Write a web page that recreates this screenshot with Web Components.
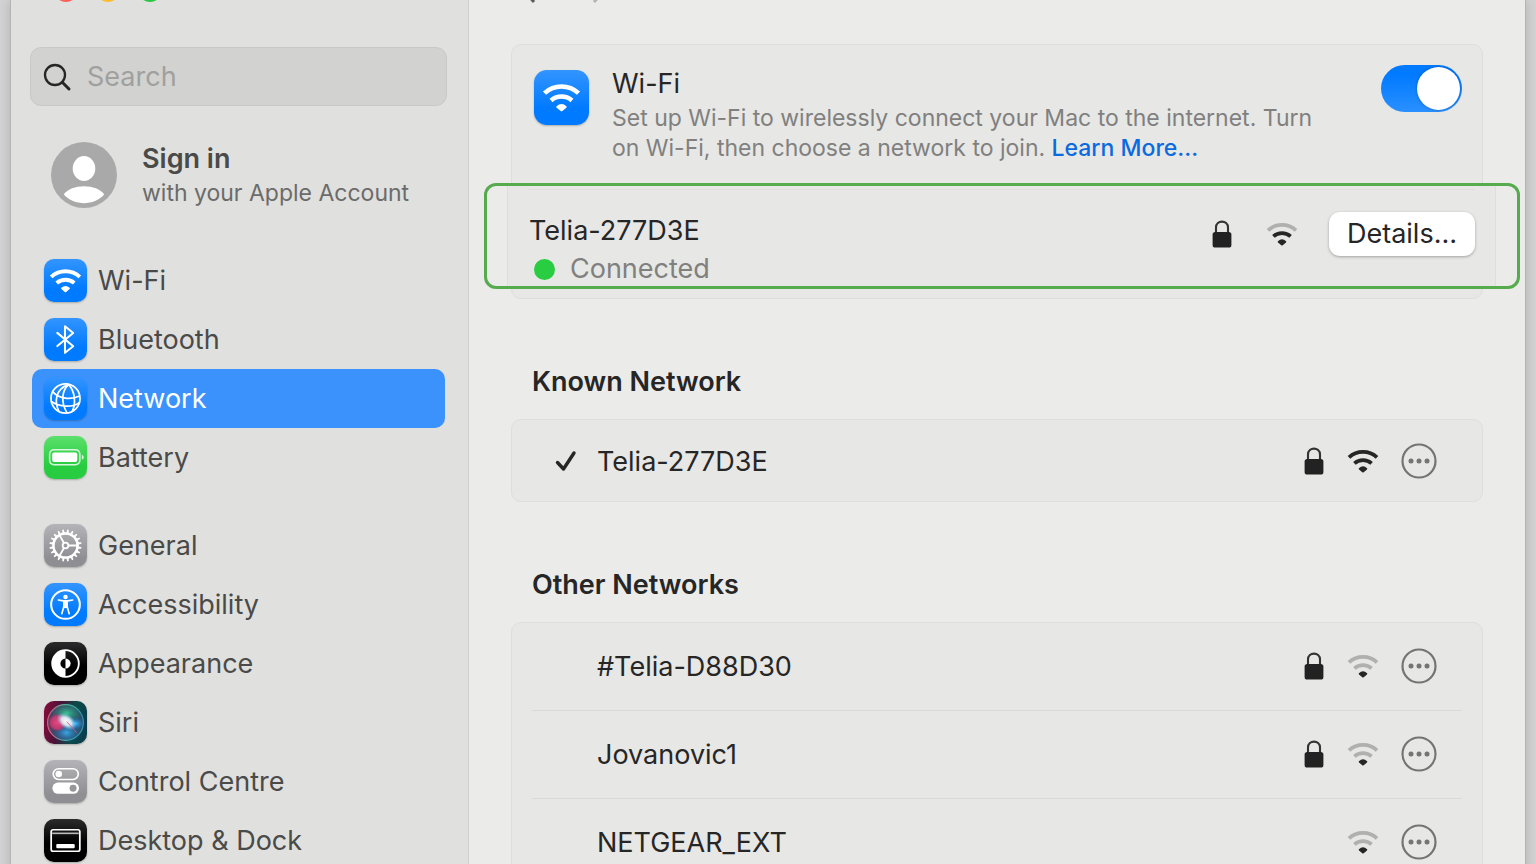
<!DOCTYPE html>
<html lang="en">
<head>
<meta charset="utf-8">
<title>Network</title>
<style>
  body {
    margin: 0;
    height: 100vh;
    overflow: hidden;
    background: #d3d3d3;
    color: #262626;
    font-family: Inter, "Liberation Sans", sans-serif;
    font-size: 27px;
    line-height: 34px;
  }
</style>
</head>
<body>
<settings-window>
  <settings-sidebar slot="sidebar">
    <search-field></search-field>
    <account-link name="Sign in" detail="with your Apple Account"></account-link>
    <nav-group label="Connectivity">
      <nav-item icon="wifi">Wi-Fi</nav-item>
      <nav-item icon="bluetooth">Bluetooth</nav-item>
      <nav-item icon="network" selected>Network</nav-item>
      <nav-item icon="battery">Battery</nav-item>
    </nav-group>
    <nav-group label="System">
      <nav-item icon="general">General</nav-item>
      <nav-item icon="accessibility">Accessibility</nav-item>
      <nav-item icon="appearance">Appearance</nav-item>
      <nav-item icon="siri">Siri</nav-item>
      <nav-item icon="control">Control Centre</nav-item>
      <nav-item icon="dock">Desktop &amp; Dock</nav-item>
    </nav-group>
  </settings-sidebar>

  <pane-toolbar></pane-toolbar>
  <settings-card>
    <wifi-header></wifi-header>
    <current-network name="Telia-277D3E" status="Connected" signal="2"></current-network>
  </settings-card>
  <section-title>Known Network</section-title>
  <settings-card>
    <network-row signal="3" locked known>Telia-277D3E</network-row>
  </settings-card>
  <section-title>Other Networks</section-title>
  <settings-card>
    <network-row signal="1" locked>#Telia-D88D30</network-row>
    <network-row signal="1" locked>Jovanovic1</network-row>
    <network-row signal="1">NETGEAR_EXT</network-row>
  </settings-card>
</settings-window>

<script>
// the three parts of the wifi symbol, weakest first
const wifiParts = [
  '<path d="M16.9 28.2Q21 24.4 25.1 28.2Q25.6 28.8 25 29.4L21.7 32.2Q21 32.8 20.3 32.2L17 29.4Q16.4 28.8 16.9 28.2Z" fill="currentColor" class="p1"/>',
  '<path d="M12.4 23.4A13.2 13.2 0 0 1 29.6 23.4" fill="none" stroke="currentColor" stroke-width="3.8" class="p2"/>',
  '<path d="M7 17.4A20.6 20.6 0 0 1 35 17.4" fill="none" stroke="currentColor" stroke-width="3.8" class="p3"/>'
];

const gearTeeth = Array.from({ length: 20 }, (_, i) =>
  `<path d="M19.8 9l.5-3.7h1.4l.5 3.7z" transform="rotate(${i * 18 + 9} 21 21)"/>`).join('');

const icons = {
  wifi: wifiParts.join(''),
  bluetooth: '<path d="M13 14.5L28.5 27.6L20.5 34V8L28.5 14.6L13 27.4" fill="none" stroke="#fff" stroke-width="2" stroke-linejoin="round" stroke-linecap="round"/>',
  network: `<g fill="none" stroke="#fff" stroke-width="1.7">
      <circle cx="21" cy="21" r="14.2"/>
      <path d="M24 7.2C17 14 16.5 25 22.5 35M24 7.2C11 12 10 24 14.5 33.5M24 7.2C31 15 31 27 27.5 33.5M8.6 14.5C15 21.5 26 22.5 35 18.5M7.2 24C15 29.5 28 30 34.5 25"/>
    </g>`,
  battery: `<rect x="5.5" y="13.5" width="29.5" height="14.5" rx="4.2" fill="none" stroke="#d8f7dc" stroke-width="1.5"/>
    <rect x="8" y="16" width="24.5" height="9.5" rx="2" fill="#fff"/>
    <path d="M37 18.4Q38.8 19.2 38.8 20.8T37 23.2Z" fill="#d8f7dc"/>`,
  general: `<g fill="#fff">${gearTeeth}</g>
    <g fill="none" stroke="#fff">
      <circle cx="21" cy="21" r="11.8" stroke-width="2.5"/>
      <circle cx="21" cy="21" r="2.8" stroke-width="1.8"/>
      <path d="M24 21H33M19.5 18.5L15 10.6M19.5 23.5L15 31.4" stroke-width="1.8"/>
    </g>`,
  accessibility: `<circle cx="21" cy="21" r="14" fill="none" stroke="#fff" stroke-width="2"/>
    <circle cx="21" cy="13.6" r="2.2" fill="#fff"/>
    <path d="M14 16.6L19 17.5H23L28 16.6M19.5 18H22.5L22.6 23L24.6 30M19.5 18L19.4 23L17.4 30" fill="none" stroke="#fff" stroke-width="1.6" stroke-linecap="round" stroke-linejoin="round"/>
    <path d="M19 17H23V24.5H19Z" fill="#fff"/>`,
  appearance: `<circle cx="21" cy="21" r="13" fill="none" stroke="#fff" stroke-width="1.8"/>
    <path d="M21 8A13 13 0 0 0 21 34V26A5 5 0 0 1 21 16Z" fill="#fff"/>
    <path d="M21 16A5 5 0 0 1 21 26Z" fill="#fff"/>`,
  siri: `<defs>
      <radialGradient id="glow"><stop offset="0" stop-color="#fff"/><stop offset=".5" stop-color="#eaf8ff" stop-opacity=".85"/><stop offset="1" stop-color="#8cf" stop-opacity="0"/></radialGradient>
      <radialGradient id="pink"><stop offset="0" stop-color="#e8487f"/><stop offset=".7" stop-color="#cf3870" stop-opacity=".85"/><stop offset="1" stop-color="#c0205a" stop-opacity="0"/></radialGradient>
      <radialGradient id="blue"><stop offset="0" stop-color="#3fbcff"/><stop offset="1" stop-color="#1270d0" stop-opacity="0"/></radialGradient>
      <radialGradient id="green"><stop offset="0" stop-color="#3ccf9a" stop-opacity=".9"/><stop offset="1" stop-color="#1b9c7a" stop-opacity="0"/></radialGradient>
      <linearGradient id="ring" x2="1"><stop offset="0" stop-color="#e0557e"/><stop offset=".5" stop-color="#54b89c"/><stop offset="1" stop-color="#2c91b8"/></linearGradient>
    </defs>
    <circle cx="21" cy="21" r="17.5" fill="#3a5670" fill-opacity=".75" stroke="url(#ring)" stroke-width="1.2"/>
    <ellipse cx="22" cy="12" rx="15" ry="10" fill="url(#green)"/>
    <ellipse cx="22" cy="31" rx="14" ry="10" fill="url(#blue)" opacity=".8"/>
    <circle cx="13" cy="21" r="9" fill="url(#pink)"/>
    <ellipse cx="31" cy="22" rx="9" ry="6.5" fill="url(#blue)"/>
    <ellipse cx="22" cy="20" rx="11" ry="7" fill="url(#glow)" transform="rotate(35 22 20)"/>
    <path d="M22 20L32 31" stroke="#d0567f" stroke-width=".8"/>`,
  control: `<rect x="9" y="8.5" width="24.5" height="10.5" rx="5.25" fill="none" stroke="#fff" stroke-width="1.6"/>
    <circle cx="14.4" cy="13.75" r="3.2" fill="#fff"/>
    <rect x="8.2" y="22" width="26" height="11" rx="5.5" fill="#fff"/>
    <circle cx="28.4" cy="27.5" r="3.4" fill="#97979b"/>`,
  dock: `<rect x="7" y="10.5" width="28" height="21" rx="2" fill="none" stroke="#fff" stroke-width="1.7"/>
    <path d="M8 14H34" stroke="#bbb" stroke-width="1.6"/>
    <rect x="12" y="24.5" width="18" height="4" rx="1" fill="#fff"/>`
};

const tiles = {
  wifi: '#3395ff, #007aff 70%',
  bluetooth: '#3395ff, #007aff 70%',
  network: '#3395ff, #007aff 70%',
  accessibility: '#3395ff, #007aff 70%',
  battery: '#5be06c, #28cc40 70%',
  general: '#b3b3b8, #8e8e93 80%',
  control: '#b3b3b8, #8e8e93 80%',
  appearance: '#2c2c2c, #000 55%',
  dock: '#2c2c2c, #000 55%',
  siri: '100deg, #8c0c3c, #4a1238 35%, #0b4a48 65%, #0a3a50'
};

class SettingsWindow extends HTMLElement {
  constructor() {
    super();
    this.attachShadow({ mode: 'open' });
    this.shadowRoot.innerHTML = `
    <style>
      :host {
        display: grid;
        grid-template-columns: 457px minmax(0, 1fr);
        min-height: 100vh;
        margin: 0 10px;
        background: #ebebe9;
        border: solid #b4b4b4;
        border-width: 0 1px;
        box-shadow: 0 0 12px rgba(0,0,0,0.16);
        box-sizing: border-box;
      }
      main {
        padding: 0 42px;
        border-left: 1px solid #d0d0ce;
      }
    </style>
    <slot name="sidebar"></slot>
    <main><slot></slot></main>
    `;
  }
}

class SettingsSidebar extends HTMLElement {
  constructor() {
    super();
    this.attachShadow({ mode: 'open' });
    this.shadowRoot.innerHTML = `
    <style>
      :host {
        display: block;
        padding: 0 21px 0 19px;
        background: #e0e0de;
        color: #4a4a49;
      }
      .lights {
        display: flex;
        gap: 18px;
        padding-left: 24px;
        margin: -22px 0 45px;
      }
      .lights button {
        width: 24px;
        height: 24px;
        padding: 0;
        border: 0;
        border-radius: 50%;
      }
      .close { background: #ff5f57; }
      .minimise { background: #febc2e; }
      .zoom { background: #28c840; }
    </style>
    <div class="lights">
      <button class="close" aria-label="Close"></button>
      <button class="minimise" aria-label="Minimise"></button>
      <button class="zoom" aria-label="Zoom"></button>
    </div>
    <slot></slot>
    `;
  }
}

class SearchField extends HTMLElement {
  constructor() {
    super();
    this.attachShadow({ mode: 'open' });
    this.shadowRoot.innerHTML = `
    <style>
      label {
        display: flex;
        align-items: center;
        gap: 15px;
        height: 59px;
        padding: 0 12px;
        box-sizing: border-box;
        background: #d2d2d0;
        border: 1px solid #c9c9c7;
        border-radius: 11px;
      }
      svg { flex: none; }
      input {
        flex: 1;
        min-width: 0;
        padding: 0;
        border: 0;
        outline: 0;
        background: none;
        font: inherit;
        color: inherit;
      }
      input::placeholder { color: #a0a09f; }
    </style>
    <label>
      <svg width="29" height="30" viewBox="0 0 29 30" fill="none" stroke="#262626" stroke-linecap="round" aria-hidden="true">
        <circle cx="12" cy="13" r="10" stroke-width="2.3"/>
        <path d="M19.5 20.5L26 27" stroke-width="3"/>
      </svg>
      <input type="text" placeholder="Search" aria-label="Search">
    </label>
    `;
  }
}

class AccountLink extends HTMLElement {
  constructor() {
    super();
    this.attachShadow({ mode: 'open' });
    this.shadowRoot.innerHTML = `
    <style>
      a {
        display: flex;
        align-items: center;
        gap: 25px;
        margin: 34px 0 41px 21px;
        color: inherit;
        text-decoration: none;
      }
      svg { flex: none; }
      span { display: block; }
      .text { padding-top: 2px; }
      .name { font-weight: 600; }
      .detail { color: #6b6b6a; font-size: 23px; }
    </style>
    <a href="#account">
      <svg width="66" height="66" viewBox="0 0 66 66" aria-hidden="true">
        <circle cx="33" cy="33" r="33" fill="#a9a9a9"/>
        <ellipse cx="33" cy="26.5" rx="11.3" ry="12.5" fill="#fff"/>
        <path d="M12.8 52.5C20 41.5 46 41.5 53.2 52.5C43 64 23 64 12.8 52.5Z" fill="#fff"/>
      </svg>
      <div class="text">
        <span class="name">${this.getAttribute('name')}</span>
        <span class="detail">${this.getAttribute('detail')}</span>
      </div>
    </a>
    `;
  }
}

class NavGroup extends HTMLElement {
  constructor() {
    super();
    this.attachShadow({ mode: 'open' });
    this.shadowRoot.innerHTML = `
    <style>
      :host { display: block; margin: 0 2px 29px; }
    </style>
    <nav aria-label="${this.getAttribute('label')}"><slot></slot></nav>
    `;
  }
}

class NavItem extends HTMLElement {
  constructor() {
    super();
    this.attachShadow({ mode: 'open' });
    this.shadowRoot.innerHTML = `
    <style>
      a {
        display: flex;
        align-items: center;
        gap: 11px;
        height: 59px;
        padding: 0 12px;
        border-radius: 10px;
        color: inherit;
        text-decoration: none;
      }
      :host([selected]) a { background: #3b92fd; color: #fff; }
    </style>
    <a href="#${this.getAttribute('icon')}">
      <app-icon name="${this.getAttribute('icon')}"></app-icon>
      <span><slot></slot></span>
    </a>
    `;
  }
}

class AppIcon extends HTMLElement {
  constructor() {
    super();
    const name = this.getAttribute('name');
    this.attachShadow({ mode: 'open' });
    this.shadowRoot.innerHTML = `
    <style>
      :host {
        display: flex;
        align-items: center;
        justify-content: center;
        flex: none;
        width: var(--icon-size, 43px);
        height: var(--icon-size, 43px);
        border-radius: 23%;
        background: linear-gradient(${tiles[name]});
        box-shadow: 0 1px 2px rgba(0,0,0,0.25);
        color: #fff;
      }
      svg { width: var(--glyph-size, 43px); height: var(--glyph-size, 43px); }
    </style>
    <svg viewBox="0 0 42 42" aria-hidden="true">${icons[name]}</svg>
    `;
  }
}

class PaneToolbar extends HTMLElement {
  constructor() {
    super();
    this.attachShadow({ mode: 'open' });
    this.shadowRoot.innerHTML = `
    <style>
      :host {
        display: flex;
        align-items: center;
        height: 34px;
        margin: -25px 0 35px 11px;
      }
      button {
        display: flex;
        padding: 0;
        margin-right: 52px;
        border: 0;
        background: none;
        color: #5c5c5c;
      }
      button:disabled { color: #b4b4b3; }
      h1 {
        margin: 0;
        padding-bottom: 4px;
        font-size: 27px;
        line-height: 34px;
        font-weight: 600;
      }
    </style>
    <button aria-label="Back">
      <svg width="16" height="24" viewBox="0 0 16 24" fill="none" stroke="currentColor" stroke-width="3"><path d="M12 2L3 12L12 22"/></svg>
    </button>
    <button aria-label="Forward" disabled>
      <svg width="16" height="24" viewBox="0 0 16 24" fill="none" stroke="currentColor" stroke-width="3"><path d="M4 2L13 12L4 22"/></svg>
    </button>
    <h1>Wi-Fi</h1>
    `;
  }
}

class SettingsCard extends HTMLElement {
  constructor() {
    super();
    this.attachShadow({ mode: 'open' });
    this.shadowRoot.innerHTML = `
    <style>
      :host {
        display: block;
        background: #e7e7e5;
        border: 1px solid #dededc;
        border-radius: 10px;
      }
    </style>
    <slot></slot>
    `;
  }
}

class SectionTitle extends HTMLElement {
  constructor() {
    super();
    this.attachShadow({ mode: 'open' });
    this.shadowRoot.innerHTML = `
    <style>
      h2 {
        margin: 66px 21px 20px;
        font-size: 27px;
        line-height: 34px;
        font-weight: 600;
      }
    </style>
    <h2><slot></slot></h2>
    `;
  }
}

class ToggleSwitch extends HTMLElement {
  constructor() {
    super();
    this.attachShadow({ mode: 'open' });
    this.shadowRoot.innerHTML = `
    <style>
      :host { display: block; flex: none; }
      input {
        appearance: none;
        display: flex;
        width: 81px;
        height: 47px;
        margin: 0;
        padding: 2px;
        box-sizing: border-box;
        border-radius: 24px;
        background: #c8c8c8;
      }
      input::before {
        content: "";
        width: 43px;
        height: 43px;
        border-radius: 50%;
        background: #fff;
        box-shadow: 0 0 3px rgba(0,0,0,0.3);
      }
      input:checked {
        justify-content: flex-end;
        background: linear-gradient(#007aff 20%, #2a90ff);
      }
    </style>
    <input type="checkbox" role="switch" aria-label="${this.getAttribute('label')}" checked>
    `;
  }
}

class WifiHeader extends HTMLElement {
  constructor() {
    super();
    this.attachShadow({ mode: 'open' });
    this.shadowRoot.innerHTML = `
    <style>
      :host {
        display: flex;
        align-items: flex-start;
        padding: 20px 20px 20px 22px;
      }
      app-icon {
        --icon-size: 55px;
        --glyph-size: 51px;
        margin: 5px 23px 0 0;
      }
      .text { flex: 1; }
      h2 { margin: 2px 0 0; font-size: 27px; line-height: 34px; font-weight: 400; }
      p {
        max-width: 720px;
        margin: 2px 0 0;
        color: #80807f;
        font-size: 23px;
        line-height: 30px;
      }
      a { color: #0a6ae0; font-weight: 500; text-decoration: none; }
    </style>
    <app-icon name="wifi"></app-icon>
    <div class="text">
      <h2>Wi-Fi</h2>
      <p>Set up Wi-Fi to wirelessly connect your Mac to the internet. Turn on Wi-Fi, then choose a network to join. <a href="#more">Learn More…</a></p>
    </div>
    <toggle-switch label="Wi-Fi"></toggle-switch>
    `;
  }
}

class WifiSignal extends HTMLElement {
  constructor() {
    super();
    this.attachShadow({ mode: 'open' });
    this.shadowRoot.innerHTML = `
    <style>
      :host { display: flex; flex: none; }
      :host([level="1"]) .p2,
      :host([level="1"]) .p3,
      :host([level="2"]) .p3 { color: #b0b0af; }
    </style>
    <svg width="32" height="24" viewBox="5 9 32 24" role="img" aria-label="Signal strength">${wifiParts.join('')}</svg>
    `;
  }
}

class LockIcon extends HTMLElement {
  constructor() {
    super();
    this.attachShadow({ mode: 'open' });
    this.shadowRoot.innerHTML = `
    <style>
      :host { display: flex; flex: none; }
    </style>
    <svg width="20" height="28" viewBox="0 0 20 28" role="img" aria-label="Secured">
      <path d="M4 13V7.5C4 -.4 16 -.4 16 7.5V13" fill="none" stroke="#333" stroke-width="2.1"/>
      <rect x=".6" y="12" width="18.8" height="15.5" rx="2.6" fill="#222"/>
    </svg>
    `;
  }
}

class CurrentNetwork extends HTMLElement {
  constructor() {
    super();
    this.attachShadow({ mode: 'open' });
    // the highlighted strip is wider than the card it sits in
    this.shadowRoot.innerHTML = `
    <style>
      :host {
        display: block;
        margin: 0 -38px 9px -28px;
        padding: 0 21px 0 20px;
        background: #ebebe9;
        border: 3px solid #55ab4d;
        border-radius: 12px;
      }
      .strip {
        display: flex;
        align-items: center;
        height: 100px;
        padding: 0 20px 5px 21px;
        box-sizing: border-box;
        background: linear-gradient(#dededc, #dededc) 20px 3px / calc(100% - 40px) 1px no-repeat #e7e7e5;
        border: solid #dededc;
        border-width: 0 1px;
      }
      .text {
        flex: 1;
        align-self: flex-start;
        padding-top: 28px;
      }
      .status {
        display: flex;
        align-items: center;
        gap: 15px;
        padding: 4px 0 0 5px;
        color: #80807f;
      }
      .dot {
        width: 21px;
        height: 21px;
        border-radius: 50%;
        background: #28cd41;
      }
      wifi-signal { margin: 0 31px 0 34px; }
      button {
        height: 44px;
        padding: 0 18px;
        border: 0;
        border-radius: 11px;
        background: #fff;
        box-shadow: 0 1px 3px rgba(0,0,0,0.3);
        color: #262626;
        font: inherit;
      }
    </style>
    <div class="strip">
      <div class="text">
        <div>${this.getAttribute('name')}</div>
        <div class="status"><span class="dot"></span><span>${this.getAttribute('status')}</span></div>
      </div>
      <lock-icon></lock-icon>
      <wifi-signal level="${this.getAttribute('signal')}"></wifi-signal>
      <button>Details…</button>
    </div>
    `;
  }
}

class NetworkRow extends HTMLElement {
  constructor() {
    super();
    this.attachShadow({ mode: 'open' });
    this.shadowRoot.innerHTML = `
    <style>
      :host {
        display: flex;
        align-items: center;
        height: 85px;
        margin: 0 20px;
        padding: 0 25px 2px 23px;
        border-bottom: 1px solid #dadad8;
      }
      :host(:last-child) { border-bottom: 0; }
      :host([known]) { height: 81px; padding-bottom: 0; }
      .check { display: flex; width: 42px; }
      .name { flex: 1; padding-top: 2px; }
      wifi-signal { margin: 0 22px 0 23px; }
      button {
        display: flex;
        padding: 0;
        border: 0;
        background: none;
        color: #747473;
      }
    </style>
    <span class="check">
      ${this.hasAttribute('known') ? '<svg width="22" height="22" viewBox="0 0 22 22" fill="none" stroke="#262626" stroke-width="3.4" stroke-linecap="round" stroke-linejoin="round" role="img" aria-label="Joined"><path d="M2.5 12.5L8.5 19L19 3"/></svg>' : ''}
    </span>
    <span class="name"><slot></slot></span>
    ${this.hasAttribute('locked') ? '<lock-icon></lock-icon>' : ''}
    <wifi-signal level="${this.getAttribute('signal')}"></wifi-signal>
    <button aria-label="More options">
      <svg width="36" height="36" viewBox="0 0 36 36" fill="currentColor" aria-hidden="true">
        <circle cx="18" cy="18" r="16.5" fill="none" stroke="currentColor" stroke-width="2.2"/>
        <circle cx="10" cy="18" r="2.5"/><circle cx="18" cy="18" r="2.5"/><circle cx="26" cy="18" r="2.5"/>
      </svg>
    </button>
    `;
  }
}

customElements.define("settings-window", SettingsWindow);
customElements.define("settings-sidebar", SettingsSidebar);
customElements.define("search-field", SearchField);
customElements.define("account-link", AccountLink);
customElements.define("nav-group", NavGroup);
customElements.define("app-icon", AppIcon);
customElements.define("nav-item", NavItem);
customElements.define("pane-toolbar", PaneToolbar);
customElements.define("settings-card", SettingsCard);
customElements.define("section-title", SectionTitle);
customElements.define("toggle-switch", ToggleSwitch);
customElements.define("lock-icon", LockIcon);
customElements.define("wifi-signal", WifiSignal);
customElements.define("wifi-header", WifiHeader);
customElements.define("current-network", CurrentNetwork);
customElements.define("network-row", NetworkRow);
</script>
</body>
</html>
